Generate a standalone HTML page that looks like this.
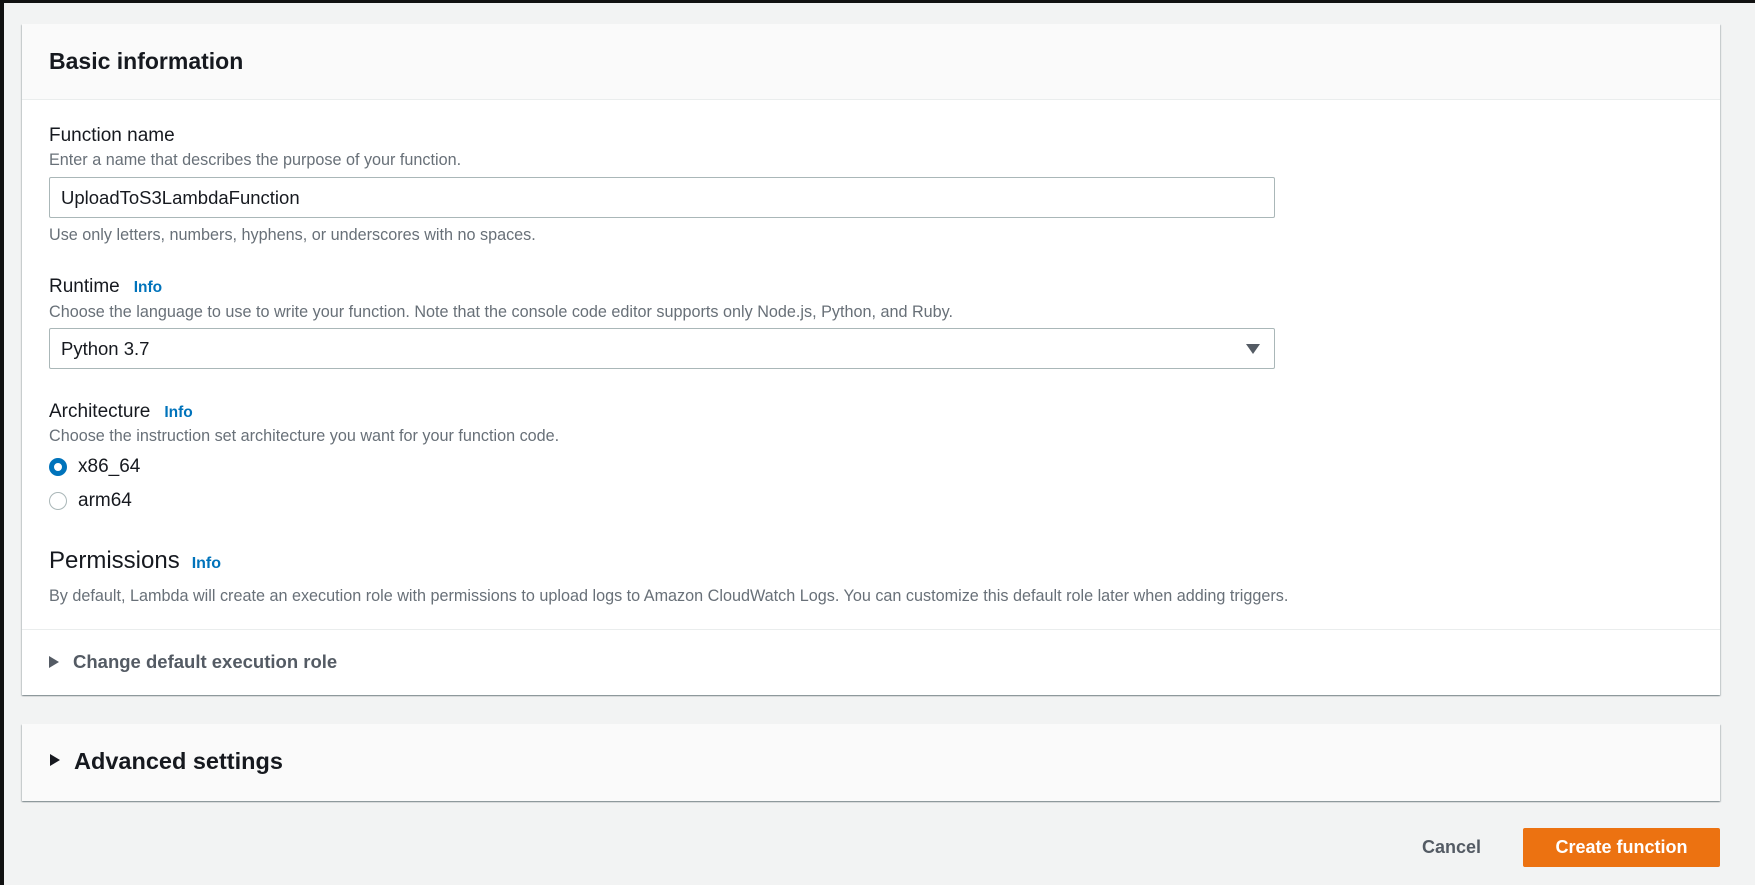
<!DOCTYPE html>
<html><head><style>
*{margin:0;padding:0;box-sizing:border-box}
body{width:1755px;height:885px;background:#f2f3f3;font-family:"Liberation Sans",sans-serif;position:relative;overflow:hidden;color:#16191f}
.frame{position:absolute;left:0;top:0;width:4px;height:885px;background:#111}
.frametop{position:absolute;left:0;top:0;width:1755px;height:3px;background:#111}
.card{position:absolute;left:22px;width:1698px;background:#fff;box-shadow:0 1px 1px rgba(0,28,36,.3),1px 1px 1px rgba(0,28,36,.15),-1px 1px 1px rgba(0,28,36,.15)}
.hdr{height:76px;background:#fafafa;border-bottom:1px solid #eaeded;position:relative}
.a{position:absolute;white-space:nowrap}
.lbl{font-size:19px;color:#16191f}
.desc{font-size:16.2px;color:#687078}
.info{font-size:15.5px;font-weight:bold;color:#0073bb;margin-left:14px}
.inp{position:absolute;left:27px;width:1226px;height:41px;border:1px solid #aab7b8;border-radius:2px;font-size:18.5px;padding:0 0 0 11px;line-height:39px}
.tri{display:inline-block;width:0;height:0;border-top:6px solid transparent;border-bottom:6px solid transparent;border-left:10px solid #545b64}
</style></head><body>
<div class="frametop"></div><div class="frame"></div>
<div class="card" style="top:24px;height:671px">
 <div class="hdr"><div class="a" style="left:27px;top:24px;font-size:23px;font-weight:bold">Basic information</div></div>
 <div class="a lbl" style="left:27px;top:101px">Function name</div>
 <div class="a desc" style="left:27px;top:127px">Enter a name that describes the purpose of your function.</div>
 <div class="inp" style="top:153px">UploadToS3LambdaFunction</div>
 <div class="a desc" style="left:27px;top:202px">Use only letters, numbers, hyphens, or underscores with no spaces.</div>
 <div class="a lbl" style="left:27px;top:252px">Runtime<span class="info">Info</span></div>
 <div class="a desc" style="left:27px;top:279px">Choose the language to use to write your function. Note that the console code editor supports only Node.js, Python, and Ruby.</div>
 <div class="inp" style="top:304px">Python 3.7<span style="position:absolute;right:14px;top:15px;width:0;height:0;border-left:7px solid transparent;border-right:7px solid transparent;border-top:10px solid #545b64"></span></div>
 <div class="a lbl" style="left:27px;top:377px">Architecture<span class="info">Info</span></div>
 <div class="a desc" style="left:27px;top:403px">Choose the instruction set architecture you want for your function code.</div>
 <div class="a" style="left:27px;top:434px;width:18px;height:18px;border-radius:50%;border:5px solid #0073bb;background:#fff"></div>
 <div class="a lbl" style="left:56px;top:432px">x86_64</div>
 <div class="a" style="left:27px;top:468px;width:18px;height:18px;border-radius:50%;border:1px solid #aab7b8"></div>
 <div class="a lbl" style="left:56px;top:466px">arm64</div>
 <div class="a" style="left:27px;top:523px;font-size:24px">Permissions<span class="info" style="font-size:16px;margin-left:12px">Info</span></div>
 <div class="a desc" style="left:27px;top:563px">By default, Lambda will create an execution role with permissions to upload logs to Amazon CloudWatch Logs. You can customize this default role later when adding triggers.</div>
 <div class="a" style="left:0;top:605px;width:1698px;height:1px;background:#eaeded"></div>
 <div class="a" style="left:27px;top:627px;font-size:18.5px;font-weight:bold;color:#545b64"><span class="tri" style="margin-right:14px"></span>Change default execution role</div>
</div>
<div class="card" style="top:724px;height:77px;background:#fafafa">
 <div class="a" style="left:28px;top:24px;font-size:23.5px;font-weight:bold"><span class="tri" style="margin-right:14px;vertical-align:3px;border-left-color:#16191f"></span>Advanced settings</div>
</div>
<div class="a" style="left:1422px;top:837px;font-size:18px;font-weight:bold;color:#545b64">Cancel</div>
<div class="a" style="left:1523px;top:828px;width:197px;height:39px;background:#ec7211;color:#fff;font-size:18px;font-weight:bold;text-align:center;line-height:39px;border-radius:2px">Create function</div>
</body></html>
